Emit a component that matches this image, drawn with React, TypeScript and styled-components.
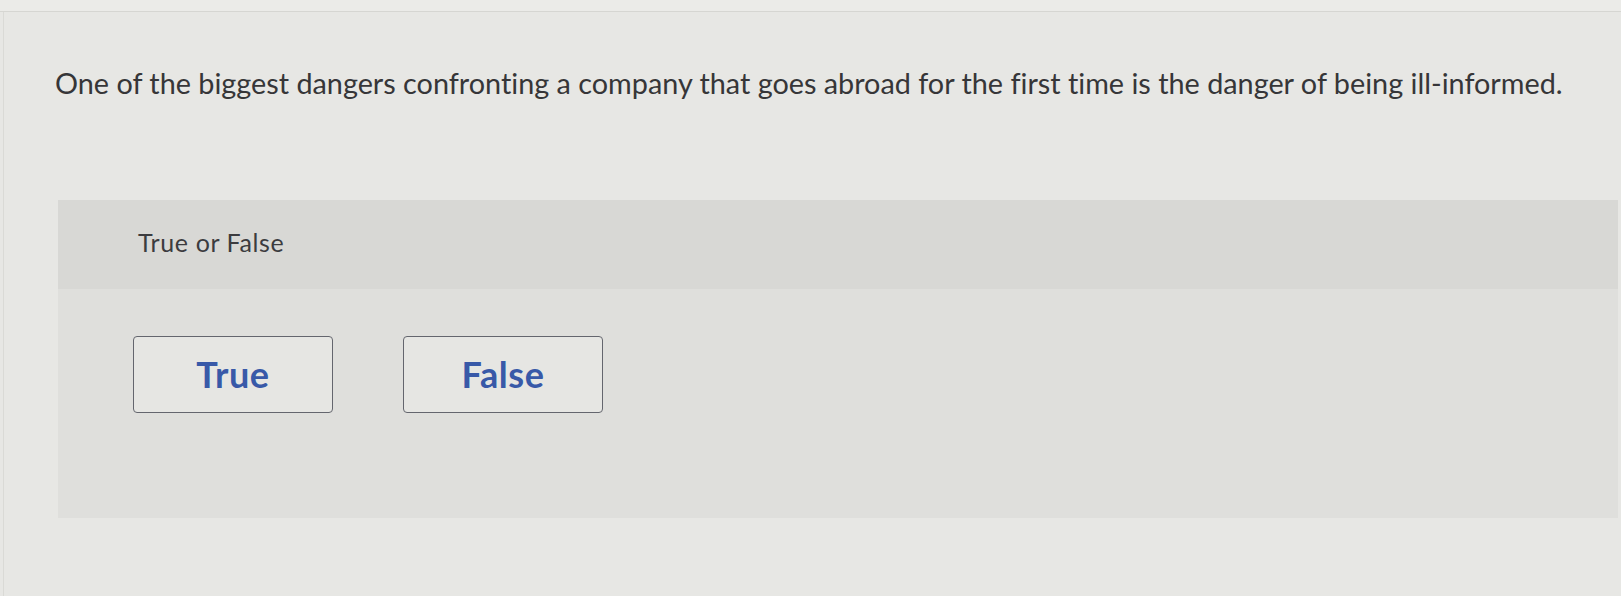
import React from "react";
import styled, { createGlobalStyle } from "styled-components";

const GlobalStyle = createGlobalStyle`
  html, body {
    margin: 0;
    padding: 0;
    background: #e7e7e4;
  }
  body {
    font-family: Lato, "Open Sans", Arial, sans-serif;
    color: #3c3c3e;
    font-variant-ligatures: none;
  }
`;

const Page = styled.div`
  width: 1621px;
  height: 596px;
  overflow: hidden;
  background: #e7e7e4;
  display: flex;
  flex-direction: column;
`;

const TopStrip = styled.div`
  height: 11px;
  flex: none;
  background: #ebebe8;
  border-bottom: 1px solid #d6d6d2;
`;

const Card = styled.section`
  flex: 1;
  margin: 0 3px 0 3px;
  border-left: 1px solid #dadad6;
  display: flex;
  flex-direction: column;
`;

const Prompt = styled.p`
  margin: 54px 0 0 51px;
  font-size: 28.8px;
  line-height: 35px;
  font-weight: 400;
  color: #363638;
  white-space: nowrap;
`;

const Panel = styled.div`
  margin: 99px 0 0 54px;
  display: flex;
  flex-direction: column;
`;

const PanelHeader = styled.div`
  height: 89px;
  box-sizing: border-box;
  padding: 27px 0 0 80px;
  background: #d8d8d5;
  font-size: 25px;
  letter-spacing: 0.6px;
  line-height: 1.2;
  color: #3c3c3f;
`;

const PanelBody = styled.div`
  height: 229px;
  box-sizing: border-box;
  padding: 47px 0 0 75px;
  background: #dfdfdc;
  display: flex;
  gap: 70px;
  align-items: flex-start;
`;

const Choice = styled.button`
  width: 200px;
  height: 77px;
  box-sizing: border-box;
  border: 1.5px solid #64666e;
  border-radius: 4px;
  background: #e6e6e3;
  font-family: Lato, "Open Sans", Arial, sans-serif;
  font-size: 36px;
  font-weight: 700;
  letter-spacing: 0.6px;
  color: #3859a8;
  cursor: pointer;
  display: flex;
  align-items: center;
  justify-content: center;
  padding: 0 0 2px 0;
`;

export default function App() {
  return (
    <>
      <GlobalStyle />
      <Page>
        <TopStrip />
        <Card>
          <Prompt>
            One of the biggest dangers confronting a company that goes abroad for the first time is the danger of being ill-informed.
          </Prompt>
          <Panel>
            <PanelHeader>True or False</PanelHeader>
            <PanelBody>
              <Choice type="button">True</Choice>
              <Choice type="button">False</Choice>
            </PanelBody>
          </Panel>
        </Card>
      </Page>
    </>
  );
}
